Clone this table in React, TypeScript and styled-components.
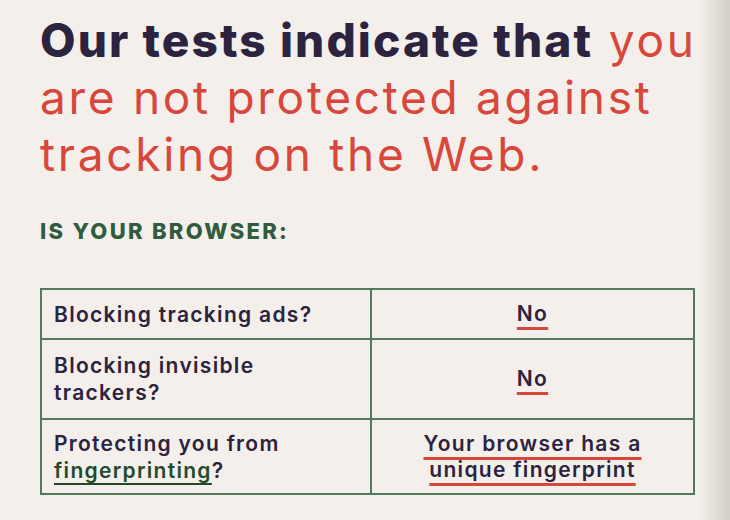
import React from 'react';
import styled, {createGlobalStyle} from 'styled-components';

const GlobalStyle = createGlobalStyle`
  html, body {
    margin: 0;
    padding: 0;
  }
  body {
    background: #f4efeb;
    font-family: Inter, "Noto Sans", sans-serif;
  }
`

interface RowType {
    question: React.ReactNode;
    answer: React.ReactNode;
    height: number;
}

const App = () => {
    const rows: RowType[] = [
        {question: 'Blocking tracking ads?', answer: 'No', height: 50},
        {question: 'Blocking invisible trackers?', answer: 'No', height: 80},
        {
            question: <>Protecting you from <Link>fingerprinting</Link>?</>,
            answer: 'Your browser has a unique fingerprint',
            height: 75,
        },
    ]

    return (
        <>
            <GlobalStyle/>
            <Page>
                <Headline>
                    <Strong>Our tests indicate that</Strong>{' '}
                    <Alert>you are not protected against tracking on the Web.</Alert>
                </Headline>
                <SubTitle>IS YOUR BROWSER:</SubTitle>
                <Table>
                    <colgroup>
                        <col style={{width: 330}}/>
                        <col/>
                    </colgroup>
                    <tbody>
                    {rows.map((row, index) => (
                        <Row key={index} $height={row.height}>
                            <Question>{row.question}</Question>
                            <Answer><Result>{row.answer}</Result></Answer>
                        </Row>
                    ))}
                    </tbody>
                </Table>
            </Page>
        </>
    );
};

const Page = styled.div`
  width: 730px;
  height: 520px;
  box-sizing: border-box;
  padding: 12px 35px 0 40px;
  overflow: hidden;
  background: linear-gradient(to right, #f4efeb 0, #f4efeb 698px, #e7e1dc 712px, #d5cfca 730px);
`
const Headline = styled.h1`
  margin: 0;
  font-size: 46px;
  line-height: 57px;
  font-weight: 400;
  letter-spacing: 2.7px;
  width: 675px;
`
const Strong = styled.span`
  color: #2b2340;
  font-weight: 800;
  letter-spacing: 2.1px;
`
const Alert = styled.span`
  color: #d8473c;
`
const SubTitle = styled.h2`
  margin: 35px 0 0;
  font-size: 22px;
  line-height: 26px;
  font-weight: 800;
  color: #2f5c3e;
  letter-spacing: 2.3px;
`
const Table = styled.table`
  margin-top: 44px;
  width: 655px;
  table-layout: fixed;
  border-collapse: collapse;
  border: 2px solid #4f7d5c;
`
const Row = styled.tr<{ $height: number }>`
  height: ${({$height}) => $height}px;
`
const Question = styled.td`
  border: 2px solid #4f7d5c;
  padding: 4px 16px 4px 12px;
  font-size: 21px;
  line-height: 27px;
  font-weight: 600;
  letter-spacing: 1.3px;
  color: #2b2340;
`
const Answer = styled.td`
  border: 2px solid #4f7d5c;
  padding: 4px 36px;
  text-align: center;
  font-size: 21px;
  line-height: 26px;
  font-weight: 600;
  letter-spacing: 1.3px;
  color: #2b2340;
`
const Result = styled.span`
  text-decoration: underline;
  text-decoration-color: #d8473c;
  text-decoration-thickness: 3px;
  text-decoration-skip-ink: none;
  text-underline-offset: 6px;
`
const Link = styled.span`
  color: #1f4a2c;
  text-decoration: underline;
  text-decoration-thickness: 1.5px;
  text-decoration-skip-ink: none;
  text-underline-offset: 5px;
`

export default App;
